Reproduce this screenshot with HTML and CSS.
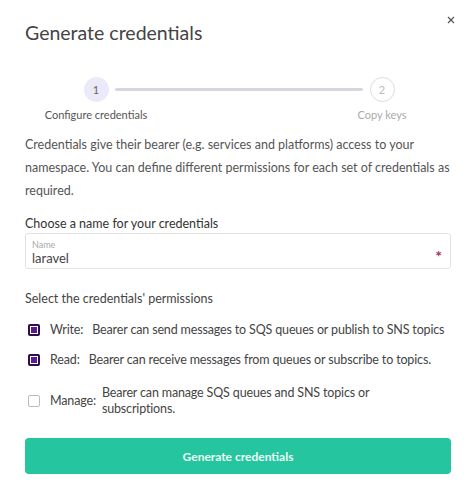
FILE: index.html
```html
<!DOCTYPE html>
<html>
<head>
<meta charset="utf-8">
<link rel="stylesheet" href="styles.css">
</head>
<body>
<div class="modal">
  <button class="close" aria-label="Close">
    <svg width="8" height="8" viewBox="0 0 8 8"><path d="M1 1L7 7M7 1L1 7" stroke="#555" stroke-width="1.2"/></svg>
  </button>
  <h1 class="title">Generate credentials</h1>

  <div class="stepper">
    <div class="step step-active">
      <div class="circle">1</div>
      <div class="step-label">Configure credentials</div>
    </div>
    <div class="step-line"></div>
    <div class="step step-next">
      <div class="circle">2</div>
      <div class="step-label">Copy keys</div>
    </div>
  </div>

  <p class="intro">Credentials give their bearer (e.g. services and platforms) access to your namespace. You can define different permissions for each set of credentials as required.</p>

  <div class="field-title">Choose a name for your credentials</div>
  <div class="input">
    <div class="input-body">
      <div class="input-label">Name</div>
      <div class="input-value">laravel</div>
    </div>
    <span class="required">*</span>
  </div>

  <div class="perm-title">Select the credentials' permissions</div>
  <div class="perms">
    <div class="perm">
      <span class="box checked"></span>
      <span class="perm-name">Write:</span>
      <span class="perm-desc">Bearer can send messages to SQS queues or publish to SNS topics</span>
    </div>
    <div class="perm">
      <span class="box checked"></span>
      <span class="perm-name">Read:</span>
      <span class="perm-desc">Bearer can receive messages from queues or subscribe to topics.</span>
    </div>
    <div class="perm perm-wrap">
      <span class="box"></span>
      <span class="perm-name">Manage:</span>
      <span class="perm-desc">Bearer can manage SQS queues and SNS topics or subscriptions.</span>
    </div>
  </div>

  <button class="primary">Generate credentials</button>
</div>
</body>
</html>
```
FILE: styles.css
```css
* { box-sizing: border-box; }
html, body { margin: 0; padding: 0; background: #fff; }
body {
  font-family: "Lato", "Open Sans", sans-serif;
  color: #555;
  width: 474px;
  height: 497px;
  overflow: hidden;
}
.modal {
  position: relative;
  padding: 20px 23px 0 25px;
}
.close {
  position: absolute;
  top: 16px;
  right: 19px;
  border: 0;
  background: none;
  padding: 0;
  width: 8px;
  height: 8px;
  display: flex;
}
.title {
  margin: 0;
  font-size: 19.5px;
  font-weight: 400;
  color: #444;
  line-height: 26px;
}
.stepper {
  display: flex;
  align-items: flex-start;
  margin-top: 31px;
  padding: 0 45px 0 20px;
}
.step {
  position: relative;
  z-index: 1;
  display: flex;
  flex-direction: column;
  align-items: center;
  width: 102px;
}
.step-next { width: 48px; }
.circle {
  width: 25px;
  height: 25px;
  border-radius: 50%;
  display: flex;
  align-items: center;
  justify-content: center;
  font-size: 11px;
}
.step-active .circle { background: #ebeaf8; color: #666; }
.step-next .circle { border: 1px solid #ddd; color: #bbb; background: #fff; }
.step-label { font-size: 11px; margin-top: 5px; white-space: nowrap; line-height: 16px; }
.step-active .step-label { color: #555; }
.step-next .step-label { color: #aaa; }
.step-line {
  flex: 1;
  height: 3px;
  background: #d4d7de;
  margin: 11px -5px 0 -32px;
  border-radius: 2px;
}
.intro {
  margin: 10px 0 0;
  font-size: 12.5px;
  line-height: 23px;
  color: #555;
}
.field-title {
  margin-top: 14px;
  font-size: 12.5px;
  color: #333;
  line-height: 16px;
}
.input {
  margin-top: 1px;
  height: 36px;
  border: 1px solid #e2e2e2;
  border-radius: 3px;
  display: flex;
  align-items: center;
  padding: 0 8px 0 6px;
}
.input-body { flex: 1; padding-top: 2px; }
.input-label { font-size: 9px; color: #aaa; line-height: 11px; }
.input-value { font-size: 13px; color: #444; line-height: 16px; }
.required { color: #a0335a; font-size: 16px; font-weight: 700; margin-top: 8px; }
.perm-title {
  margin-top: 21px;
  font-size: 12.5px;
  color: #444;
  line-height: 18px;
}
.perms { margin-top: 13px; display: flex; flex-direction: column; gap: 12px; }
.perm {
  display: flex;
  align-items: center;
  font-size: 12.5px;
  color: #444;
  line-height: 18px;
  letter-spacing: -0.15px;
}
.box {
  width: 12px;
  height: 12px;
  border: 1.5px solid #bbb;
  border-radius: 2px;
  margin: 0 10px 0 3px;
  flex: none;
  background: #fff;
}
.box.checked {
  border: 2px solid #2e0c4e;
  background: #fff;
  box-shadow: inset 0 0 0 1px #fff, inset 0 0 0 6px #5b1c90;
}
.perm-name { margin-right: 9px; flex: none; }
.perm-wrap { margin-top: 4px; line-height: 16px; }
.perm-wrap .perm-desc { width: 280px; }
.perm-wrap .perm-name { margin-right: 6px; }
.primary {
  display: block;
  margin-top: 21px;
  width: 100%;
  height: 36px;
  border: 0;
  border-radius: 4px;
  background: #24c59f;
  color: #eefbf7;
  font-family: inherit;
  font-size: 12px;
  font-weight: 700;
}
```
